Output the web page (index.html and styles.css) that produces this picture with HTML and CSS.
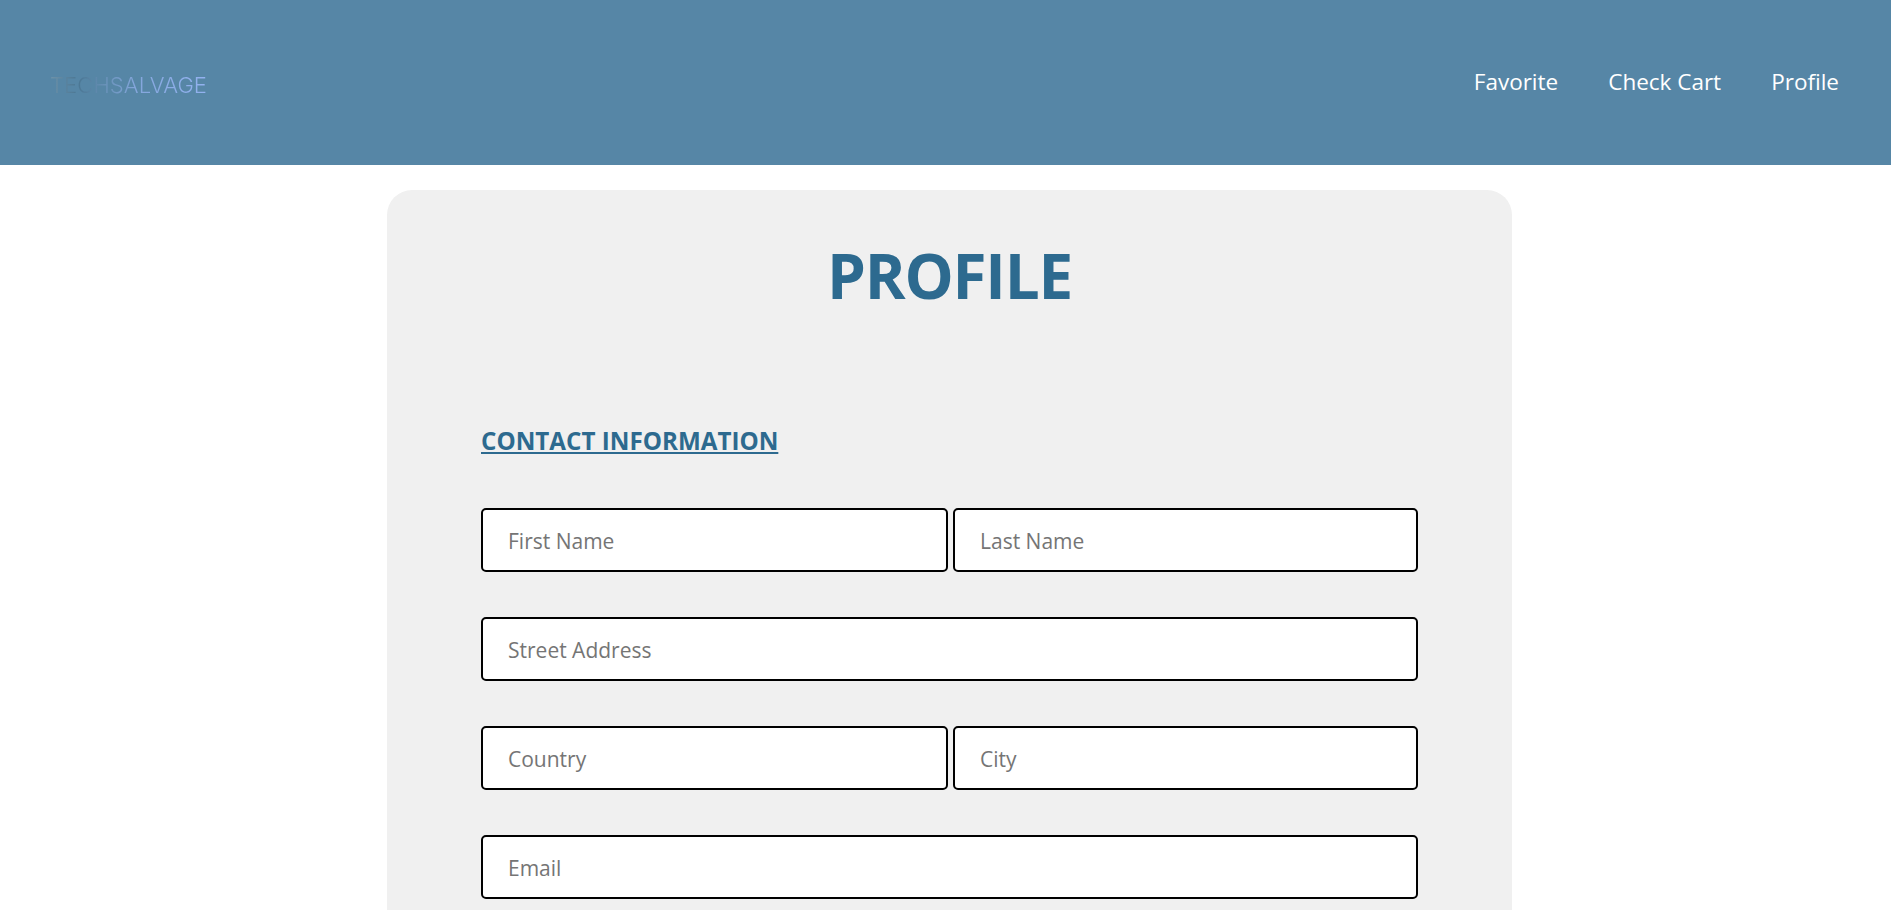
FILE: index.html
```html
<!DOCTYPE html>
<html lang="en">

<head>
    <meta charset="UTF-8">
    <meta name="viewport" content="width=device-width, initial-scale=1.0">
    <title>Profile</title>
    <link rel="stylesheet" href="styles.css">
</head>

<body>
    <!-- top bar -->
    <header class="navbar">
        <a class="logo" href="#">TECHSALVAGE</a>
        <nav class="nav-links">
            <a href="#">Favorite</a>
            <a href="#">Check Cart</a>
            <a href="#">Profile</a>
        </nav>
    </header>

    <!-- profile form -->
    <main class="profile-card">
        <h1 class="profile-title">PROFILE</h1>
        <h2 class="section-title">CONTACT INFORMATION</h2>
        <form class="profile-form">
            <div class="form-row">
                <input type="text" placeholder="First Name">
                <input type="text" placeholder="Last Name">
            </div>
            <div class="form-row single">
                <input type="text" placeholder="Street Address">
            </div>
            <div class="form-row">
                <input type="text" placeholder="Country">
                <input type="text" placeholder="City">
            </div>
            <div class="form-row single">
                <input type="email" placeholder="Email">
            </div>
        </form>
    </main>
</body>

</html>
```

FILE: styles.css
```css
* {
    margin: 0;
    padding: 0;
    box-sizing: border-box;
}

html,
body {
    height: 910px;
    overflow: hidden;
}

body {
    font-family: "Open Sans", "Noto Sans", sans-serif;
    background: #fff;
}

a {
    text-decoration: none;
}

/* top bar */

.navbar {
    height: 165px;
    padding: 0 52px 0 50px;
    display: flex;
    align-items: center;
    justify-content: space-between;
    background: #5686a6;
}

.logo {
    margin-top: 5px;
    font-family: "Inter", sans-serif;
    font-size: 22px;
    font-weight: 300;
    letter-spacing: 0.1px;
    color: transparent;
    background: linear-gradient(90deg, #6f93aa 0%, #4a7693 18%, #6a93ba 36%, #84a6dc 55%, #93b2f0 100%);
    -webkit-background-clip: text;
    background-clip: text;
}

.nav-links {
    display: flex;
    gap: 50px;
    margin-bottom: 2px;
}

.nav-links a {
    font-size: 22.5px;
    color: #fff;
}

/* profile form */

.profile-card {
    width: 1125px;
    min-height: 900px;
    margin: 25px 0 0 387px;
    padding: 0 94px;
    background: #f0f0f0;
    border-radius: 25px;
}

.profile-title {
    padding-top: 45px;
    font-size: 62px;
    line-height: 80px;
    font-weight: 700;
    letter-spacing: -1.2px;
    color: #2d6a8f;
    text-align: center;
}

.section-title {
    margin-top: 110px;
    font-size: 24.2px;
    line-height: 32px;
    font-weight: 700;
    color: #2d6a8f;
    text-decoration: underline;
}

.profile-form {
    margin-top: 51px;
    display: flex;
    flex-direction: column;
    gap: 45px;
}

.form-row {
    display: grid;
    grid-template-columns: 467px 465px;
    gap: 5px;
}

.form-row.single {
    grid-template-columns: 1fr;
}

.form-row input {
    height: 64px;
    padding: 2px 25px 0;
    border: 2px solid #000;
    border-radius: 5px;
    background: #fff;
    font-family: inherit;
    font-size: 21px;
}

.form-row input::placeholder {
    color: #757575;
    opacity: 1;
}
```
